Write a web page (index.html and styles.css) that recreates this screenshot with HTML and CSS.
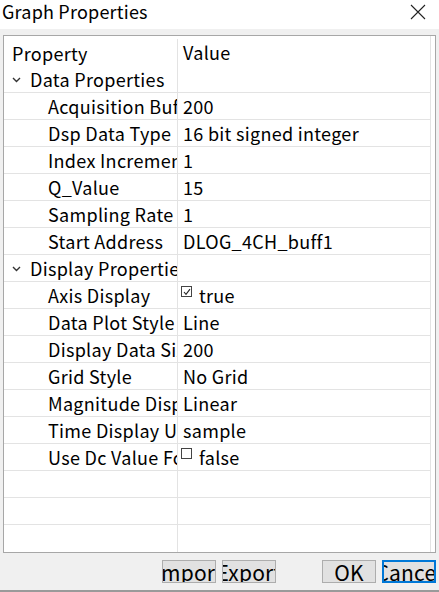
FILE: index.html
```html
<!DOCTYPE html>
<html>
<head>
<meta charset="utf-8">
<link rel="stylesheet" href="styles.css">
</head>
<body>
<div class="window">
  <div class="titlebar">
    <span class="title">Graph Properties</span>
    <svg class="close" width="16" height="16" viewBox="0 0 16 16"><path d="M1 1 L15 15 M15 1 L1 15" stroke="#222" stroke-width="1.1" fill="none"/></svg>
  </div>
  <div class="panel">
    <div class="grid">
      <div class="row head"><div class="k">Property</div><div class="v">Value</div></div>
      <div class="row"><div class="k grp"><svg class="chev" width="9" height="6" viewBox="0 0 9 6"><path d="M1 1 L4.5 4.5 L8 1" stroke="#333" stroke-width="1.4" fill="none"/></svg>Data Properties</div><div class="v"></div></div>
      <div class="row"><div class="k sub">Acquisition Buffer Size</div><div class="v">200</div></div>
      <div class="row"><div class="k sub">Dsp Data Type</div><div class="v">16 bit signed integer</div></div>
      <div class="row"><div class="k sub">Index Increment</div><div class="v">1</div></div>
      <div class="row"><div class="k sub">Q_Value</div><div class="v">15</div></div>
      <div class="row"><div class="k sub">Sampling Rate</div><div class="v">1</div></div>
      <div class="row"><div class="k sub">Start Address</div><div class="v">DLOG_4CH_buff1</div></div>
      <div class="row"><div class="k grp"><svg class="chev" width="9" height="6" viewBox="0 0 9 6"><path d="M1 1 L4.5 4.5 L8 1" stroke="#333" stroke-width="1.4" fill="none"/></svg>Display Properties</div><div class="v"></div></div>
      <div class="row"><div class="k sub">Axis Display</div><div class="v"><span class="cb"><svg width="8" height="8" viewBox="0 0 8 8"><path d="M1 4 L3 6.3 L7 1.2" stroke="#222" stroke-width="1.1" fill="none"/></svg></span>true</div></div>
      <div class="row"><div class="k sub">Data Plot Style</div><div class="v">Line</div></div>
      <div class="row"><div class="k sub">Display Data Size</div><div class="v">200</div></div>
      <div class="row"><div class="k sub">Grid Style</div><div class="v">No Grid</div></div>
      <div class="row"><div class="k sub">Magnitude Display Scale</div><div class="v">Linear</div></div>
      <div class="row"><div class="k sub">Time Display Unit</div><div class="v">sample</div></div>
      <div class="row"><div class="k sub">Use Dc Value For Graph</div><div class="v"><span class="cb"></span>false</div></div>
      <div class="row"><div class="k"></div><div class="v"></div></div>
      <div class="row"><div class="k"></div><div class="v"></div></div>
      <div class="row last"><div class="k"></div><div class="v"></div></div>
    </div>
  </div>
  <div class="buttons">
    <div class="btn"><span>Import</span></div>
    <div class="btn"><span>Export</span></div>
    <div class="btn ok"><span>OK</span></div>
    <div class="btn focus"><span>Cancel</span></div>
  </div>
</div>
</body>
</html>
```

FILE: styles.css
```css
* { box-sizing: border-box; }
html, body {
  margin: 0;
  padding: 0;
}
body {
  width: 439px;
  height: 592px;
  overflow: hidden;
  background: #f0f0f0;
  font-family: "Noto Sans CJK SC", "Noto Sans", sans-serif;
  font-size: 18px;
  letter-spacing: 0.3px;
  color: #000;
}
.window {
  width: 439px;
  height: 592px;
  display: flex;
  flex-direction: column;
  border-bottom: 2px solid #9a9a9a;
}
.titlebar {
  height: 29px;
  background: #fff;
  display: flex;
  align-items: flex-start;
  justify-content: space-between;
  padding: 0 13px 0 2px;
}
.title {
  line-height: 23px;
  font-size: 18px;
  letter-spacing: 0.2px;
}
.close {
  margin-top: 4px;
}
.panel {
  margin: 6px 3px 0 3px;
  height: 518px;
  border: 1px solid #a7a7a7;
  background: #fff;
  overflow: hidden;
}
.grid {
  width: 427px;
  border-right: 1px solid #e3e3e3;
  height: 100%;
}
.row {
  display: flex;
  height: 27px;
  border-bottom: 1px solid #e3e3e3;
  line-height: 26px;
  white-space: nowrap;
}
.row.head {
  height: 30px;
  padding-top: 3px;
  border-bottom: none;
}
.row.last {
  border-bottom: none;
}
.k {
  width: 174px;
  flex: none;
  border-right: 1px solid #e3e3e3;
  overflow: hidden;
  padding-left: 8px;
  padding-right: 1px;
  display: flex;
  align-items: center;
}
.k.grp {
  padding-left: 8px;
}
.k.sub {
  padding-left: 44px;
}
.chev {
  margin-right: 9px;
  margin-top: 2px;
  flex: none;
}
.v {
  flex: 1;
  padding-left: 5px;
  display: flex;
  align-items: flex-start;
  overflow: hidden;
}
.cb {
  width: 11px;
  height: 11px;
  border: 1px solid #444;
  margin: 4px 7px 0 -2px;
  display: flex;
  align-items: center;
  justify-content: center;
  flex: none;
  background: #fff;
}
.buttons {
  display: flex;
  justify-content: flex-end;
  padding: 7px 3px 0 0;
  gap: 6px;
}
.btn {
  width: 54px;
  height: 23px;
  background: #e1e1e1;
  border: 1px solid #adadad;
  display: flex;
  justify-content: center;
  align-items: center;
  overflow: hidden;
  line-height: 22px;
  font-size: 21px;
  letter-spacing: 0.2px;
}
.btn span {
  flex: none;
  white-space: nowrap;
}
.btn.ok {
  margin-left: 40px;
}
.btn.focus {
  border: 2px solid #0078d7;
}
```
